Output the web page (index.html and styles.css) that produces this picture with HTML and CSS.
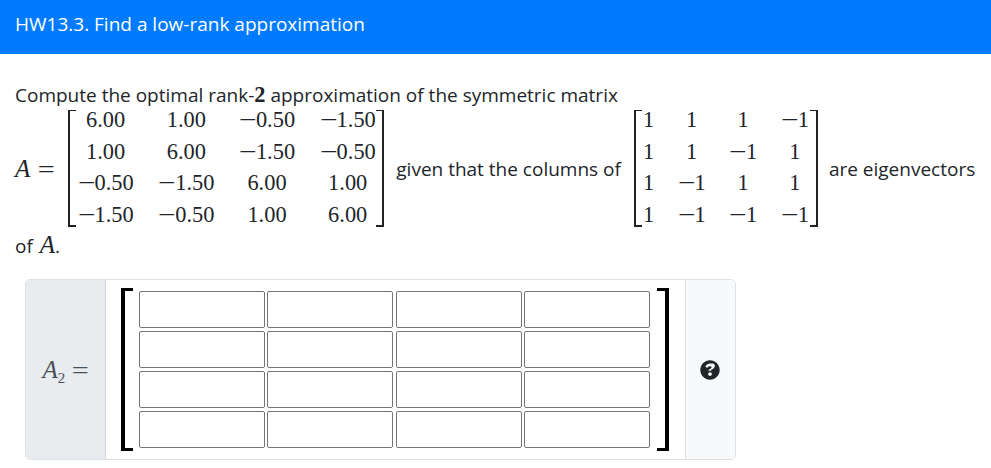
FILE: index.html
```html
<!DOCTYPE html>
<html lang="en">
<head>
  <title>HW13.3. Find a low-rank approximation</title>
  <link rel="stylesheet" href="styles.css">
</head>
<body>

  <!-- Question header -->
  <div class="card-header">HW13.3. Find a low-rank approximation</div>

  <div class="card-body">
    <p class="intro">Compute the optimal rank-<span class="math bold">2</span> approximation of the symmetric matrix</p>

    <div class="math-line">
      <span class="math"><i>A</i> <span class="eq">=</span></span>
      <div class="matrix wide">
        <span>6.00</span><span>1.00</span><span><b>−</b>0.50</span><span><b>−</b>1.50</span>
        <span>1.00</span><span>6.00</span><span><b>−</b>1.50</span><span><b>−</b>0.50</span>
        <span><b>−</b>0.50</span><span><b>−</b>1.50</span><span>6.00</span><span>1.00</span>
        <span><b>−</b>1.50</span><span><b>−</b>0.50</span><span>1.00</span><span>6.00</span>
      </div>
      <span>given that the columns of</span>
      <div class="matrix">
        <span>1</span><span>1</span><span>1</span><span><b>−</b>1</span>
        <span>1</span><span>1</span><span><b>−</b>1</span><span>1</span>
        <span>1</span><span><b>−</b>1</span><span>1</span><span>1</span>
        <span>1</span><span><b>−</b>1</span><span><b>−</b>1</span><span><b>−</b>1</span>
      </div>
      <span class="after-matrix">are eigenvectors</span>
    </div>

    <p class="outro">of <span class="math"><i>A</i></span>.</p>

    <!-- Answer box -->
    <div class="input-group">
      <div class="addon-label"><span class="math"><i>A</i><sub>2</sub> <span class="eq">=</span></span></div>
      <div class="answer">
        <div class="big-bracket left"></div>
        <div class="answer-grid">
          <input type="text"><input type="text"><input type="text"><input type="text">
          <input type="text"><input type="text"><input type="text"><input type="text">
          <input type="text"><input type="text"><input type="text"><input type="text">
          <input type="text"><input type="text"><input type="text"><input type="text">
        </div>
        <div class="big-bracket right"></div>
      </div>
      <div class="addon-help">
        <svg class="help-icon" viewBox="0 0 512 512">
          <path d="M504 256c0 137-111 248-248 248S8 393 8 256C8 119.100 119 8 256 8s248 111.100 248 248zM262.700 90c-54.500 0-89.300 23-121.200 62.800-4.100 5.200-3 12.800 2.300 16.800l34.100 25.900c5.100 3.900 12.400 3 16.300-2.200 17.500-22.200 29.500-35.100 56.200-35.100 20 0 44.800 12.900 44.800 32.300 0 14.700-12.100 22.200-31.900 33.300-23 12.900-53.300 29-53.300 69.200V264c0 6.600 5.400 12 12 12h56c6.600 0 12-5.400 12-12v-1.800c0-30.500 89.200-31.800 89.200-114.300 0-62.100-64.500-57.900-114.500-57.900zM256 312c-27.200 0-49.300 22.100-49.300 49.300s22.100 49.300 49.300 49.300 49.300-22.100 49.300-49.300S283.200 312 256 312z"/>
        </svg>
      </div>
    </div>
  </div>

</body>
</html>
```

FILE: styles.css
```css
body {
  font-family: "Open Sans", Arial, sans-serif;
  font-size: 19px;
  color: #212529;
  background-color: #fff;
  margin: 0;
}

.card-header {
  height: 54px;
  line-height: 49px;
  padding: 0 15px;
  background-color: #007bff;
  color: #fff;
}

.card-body {
  padding: 27px 15px 0;
}

.intro, .outro {
  margin: 0;
  line-height: 26px;
  white-space: nowrap;
}

.intro {
  line-height: 28px;
}

.math {
  font-family: "Liberation Serif", "Times New Roman", serif;
  font-size: 22.4px;
  white-space: nowrap;
}

.math i {
  font-size: 25px;
}

.bold {
  font-weight: bold;
}

/* the = of the math font is wider than this one */
.eq {
  display: inline-block;
  transform: scaleX(1.35);
  margin: 0 2px 0 4px;
}

.math-line {
  display: flex;
  align-items: center;
  height: 119px;
  gap: 13px;
  white-space: nowrap;
}

.after-matrix {
  margin-left: -2px;
}

.matrix {
  display: grid;
  grid-template-columns: repeat(4, auto);
  column-gap: 23.4px;
  row-gap: 13.6px;
  padding: 1px 7px 3px;
  border-left: 2px solid #222;
  border-right: 2px solid #222;
  position: relative;
  font-family: "Liberation Serif", "Times New Roman", serif;
  font-size: 22.4px;
  line-height: 18px;
  text-align: center;
  height: 113px;
}

.matrix.wide {
  column-gap: 24.5px;
  padding: 1px 6.5px 3px 8px;
  margin-right: -1px;
}

/* brackets' ticks */
.matrix::before, .matrix::after {
  content: "";
  position: absolute;
  top: 0;
  bottom: 0;
  width: 6px;
  border-top: 1px solid #222;
  border-bottom: 2px solid #222;
}

.matrix::before {
  left: 0;
}

.matrix::after {
  right: 0;
}

/* same for the minus sign */
.matrix b {
  display: inline-block;
  width: 17px;
  font-weight: normal;
  text-align: left;
  transform: scaleX(1.4);
  transform-origin: 0 50%;
}

.outro {
  margin-top: 4px;
}

.outro .math {
  margin-left: 2px;
}

.input-group {
  display: flex;
  width: 711px;
  height: 181px;
  margin: 20px 0 0 10px;
  box-sizing: border-box;
  border: 1px solid #dee2e6;
  border-radius: 5px;
}

.addon-label {
  display: flex;
  align-items: center;
  justify-content: center;
  width: 80px;
  background-color: #e9ecef;
  border-right: 1px solid #ced4da;
  border-radius: 4px 0 0 4px;
  color: #495057;
  box-sizing: border-box;
}

.addon-label .eq {
  margin: 0 2px 0 3px;
}

.addon-label sub {
  font-size: 15px;
  line-height: 0;
}

.answer {
  display: flex;
  align-items: center;
  gap: 6px;
  width: 579px;
  padding: 0 15px;
  box-sizing: border-box;
}

.big-bracket {
  width: 8px;
  height: 157px;
  border: 4px solid #000;
  border-width: 3px 4px;
}

.big-bracket.left {
  border-right: none;
}

.big-bracket.right {
  border-left: none;
  margin-left: 1px;
}

.answer-grid {
  display: grid;
  grid-template-columns: repeat(4, 126px);
  grid-auto-rows: 37px;
  column-gap: 2.33px;
  row-gap: 3px;
}

.answer-grid input {
  border: 1px solid #767676;
  border-radius: 2px;
  background-color: #fff;
  padding: 0;
  width: 100%;
  height: 100%;
  box-sizing: border-box;
}

.addon-help {
  flex: 1;
  display: flex;
  align-items: center;
  justify-content: center;
  padding-right: 1px;
  background-color: #f8f9fa;
  border-left: 1px solid #dee2e6;
  border-radius: 0 4px 4px 0;
}

.help-icon {
  width: 20px;
  height: 20px;
  fill: #212529;
}
```
